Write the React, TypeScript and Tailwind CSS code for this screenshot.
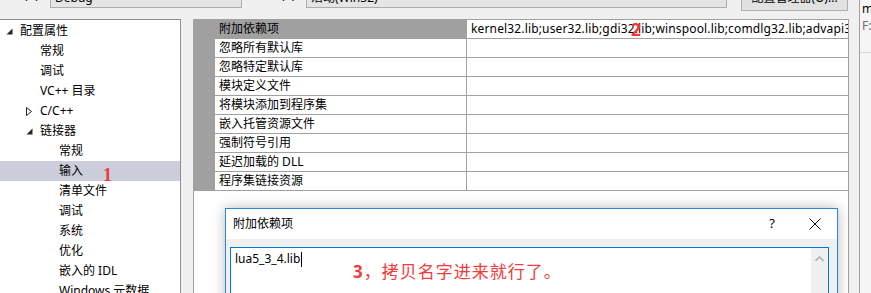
import React from "react";

const FONT = '"Noto Sans", "Noto Sans CJK SC", sans-serif';

function ExpandedTri() {
  return (
    <svg width="7" height="7" viewBox="0 0 7 7" className="shrink-0">
      <path d="M6.5 0.5 L6.5 6.5 L0.5 6.5 Z" fill="#262626" />
    </svg>
  );
}
function CollapsedTri() {
  return (
    <svg width="6" height="9" viewBox="0 0 6 9" className="shrink-0">
      <path d="M0.5 0.5 L5.5 4.5 L0.5 8.5 Z" fill="none" stroke="#262626" strokeWidth="1" />
    </svg>
  );
}

type TreeItem = { label: string; level: number; tri?: "open" | "closed"; selected?: boolean; mark?: string };

const tree: TreeItem[] = [
  { label: "配置属性", level: 0, tri: "open" },
  { label: "常规", level: 1 },
  { label: "调试", level: 1 },
  { label: "VC++ 目录", level: 1 },
  { label: "C/C++", level: 1, tri: "closed" },
  { label: "链接器", level: 1, tri: "open" },
  { label: "常规", level: 2 },
  { label: "输入", level: 2, selected: true, mark: "1" },
  { label: "清单文件", level: 2 },
  { label: "调试", level: 2 },
  { label: "系统", level: 2 },
  { label: "优化", level: 2 },
  { label: "嵌入的 IDL", level: 2 },
  { label: "Windows 元数据", level: 2 },
];

const props = [
  "附加依赖项",
  "忽略所有默认库",
  "忽略特定默认库",
  "模块定义文件",
  "将模块添加到程序集",
  "嵌入托管资源文件",
  "强制符号引用",
  "延迟加载的 DLL",
  "程序集链接资源",
];

function TreeRow({ item }: { item: TreeItem }) {
  const indent = item.level === 0 ? "pl-[6px]" : item.level === 1 ? "pl-[26px]" : "pl-[59px]";
  return (
    <div
      className={`relative h-[20px] flex items-center ${indent} ${item.selected ? "bg-[#cccedb]" : ""}`}
    >
      {item.level < 2 && (
        <div className="w-[14px] flex items-center">
          {item.tri === "open" && <ExpandedTri />}
          {item.tri === "closed" && <CollapsedTri />}
        </div>
      )}
      <span className="text-[12px] leading-[20px] text-black whitespace-nowrap">{item.label}</span>
      {item.mark && (
        <span className="absolute left-[103px] top-[4px] text-[18px] leading-[20px] font-bold text-[#f03838] [font-family:'Liberation_Serif',serif]">
          {item.mark}
        </span>
      )}
    </div>
  );
}

export default function App() {
  return (
    <div
      className="relative w-[871px] h-[293px] overflow-hidden bg-[#f0f0f0] flex"
      style={{ fontFamily: FONT }}
    >
      <div className="w-[859px] flex flex-col shrink-0">
        {/* top strip (clipped) */}
        <div className="h-[19px] flex items-start overflow-hidden shrink-0">
          <span className="w-[50px] -mt-[13px] text-[12px] leading-[16px] text-black whitespace-nowrap">配置(C):</span>
          <div className="w-[192px] h-[20px] -mt-[12px] border border-[#adadad] bg-[#e5e5e5] text-[12px] leading-[18px] pl-[4px] text-black">
            Debug
          </div>
          <span className="ml-[15px] w-[49px] -mt-[13px] text-[12px] leading-[16px] text-black whitespace-nowrap">平台(P):</span>
          <div className="w-[421px] h-[20px] -mt-[12px] border border-[#adadad] bg-[#e5e5e5] text-[12px] leading-[18px] pl-[4px] text-black">
            活动(Win32)
          </div>
          <div className="ml-[14px] w-[107px] h-[24px] -mt-[13px] border border-[#adadad] bg-[#e1e1e1] text-[12px] leading-[20px] text-center text-black">
            配置管理器(O)...
          </div>
        </div>
        <div className="flex flex-1 min-h-0">
          {/* tree */}
          <div className="w-[181px] shrink-0 bg-white border-t border-r border-[#8e8e8e] pt-px overflow-hidden">
            {tree.map((t, i) => (
              <TreeRow key={i} item={t} />
            ))}
          </div>
          <div className="w-[12px] shrink-0" />
          {/* property grid */}
          <div className="w-[656px] shrink-0 bg-white border-x border-[#a0a0a0] flex flex-col">
            <div className="bg-[#a0a0a0] pt-px flex flex-col gap-px pb-px">
              {props.map((p, i) => (
                <div key={i} className="h-[18px] flex">
                  <div className="w-[21px] shrink-0" />
                  <div
                    className={`w-[251px] shrink-0 pl-[4px] text-[12px] leading-[18px] text-black whitespace-nowrap ${
                      i === 0 ? "" : "bg-white"
                    }`}
                  >
                    {p}
                  </div>
                  <div className="w-px shrink-0" />
                  <div className="relative flex-1 bg-white pl-[4px] text-[12px] leading-[18px] text-black whitespace-nowrap overflow-hidden">
                    {i === 0 && (
                      <>
                        <span className="tracking-[0.15px]">
                          kernel32.lib;user32.lib;gdi32.lib;winspool.lib;comdlg32.lib;advapi32.lib;shell32.lib
                        </span>
                        <span className="absolute left-[164px] top-[1px] text-[17px] leading-[18px] font-bold text-[#f03838]">
                          2
                        </span>
                      </>
                    )}
                  </div>
                </div>
              ))}
            </div>
          </div>
        </div>
      </div>
      <div className="w-px shrink-0 bg-[#a0a0a0]" />
      <div className="flex-1 bg-[#f5f5f5] flex flex-col overflow-hidden">
        <div className="h-[17px] text-[12px] leading-[17px] text-black pl-[2px] whitespace-nowrap">my</div>
        <div className="h-[17px] text-[12px] leading-[17px] text-[#6d6d6d] pl-[2px] whitespace-nowrap">F:\</div>
        <div className="h-[19px] border-b border-[#d9d9d9]" />
      </div>

      {/* dialog window */}
      <div className="absolute left-[225px] top-[208px] w-[613px] h-[120px] border border-[#2b86d6] bg-[#f0f0f0] shadow-[0_0_12px_rgba(0,0,0,0.28)] flex flex-col">
        <div className="h-[30px] bg-white flex items-center shrink-0">
          <span className="pl-[7px] text-[12px] text-black flex-1">附加依赖项</span>
          <span className="w-[20px] text-center text-[13px] text-black mr-[27px]">?</span>
          <svg width="12" height="12" viewBox="0 0 12 12" className="mr-[16px]">
            <path d="M0.5 0.5 L11.5 11.5 M11.5 0.5 L0.5 11.5" stroke="#111" strokeWidth="1" />
          </svg>
        </div>
        <div className="pt-[8px] pl-[4px] pr-[8px] flex-1 flex">
          <div className="relative flex-1 border border-[#0078d7] bg-white flex">
            <div className="flex-1 pl-[4px] pt-[3px]">
              <div className="flex items-center h-[16px]">
                <span className="text-[12px] leading-[16px] text-black">lua5_3_4.lib</span>
                <span className="w-px h-[15px] bg-black ml-px" />
              </div>
            </div>
            <div className="w-[17px] bg-[#f0f0f0] flex justify-center pt-[8px]">
              <svg width="9" height="6" viewBox="0 0 9 6">
                <path d="M0.5 5 L4.5 1 L8.5 5" fill="none" stroke="#b0b0b0" strokeWidth="1.6" />
              </svg>
            </div>
            <div className="absolute left-[122px] top-[14px] text-[17px] leading-[20px] text-[#f03c3c] tracking-[1px] whitespace-nowrap">
              <span className="font-bold">3</span>，拷贝名字进来就行了。
            </div>
          </div>
        </div>
      </div>
    </div>
  );
}
